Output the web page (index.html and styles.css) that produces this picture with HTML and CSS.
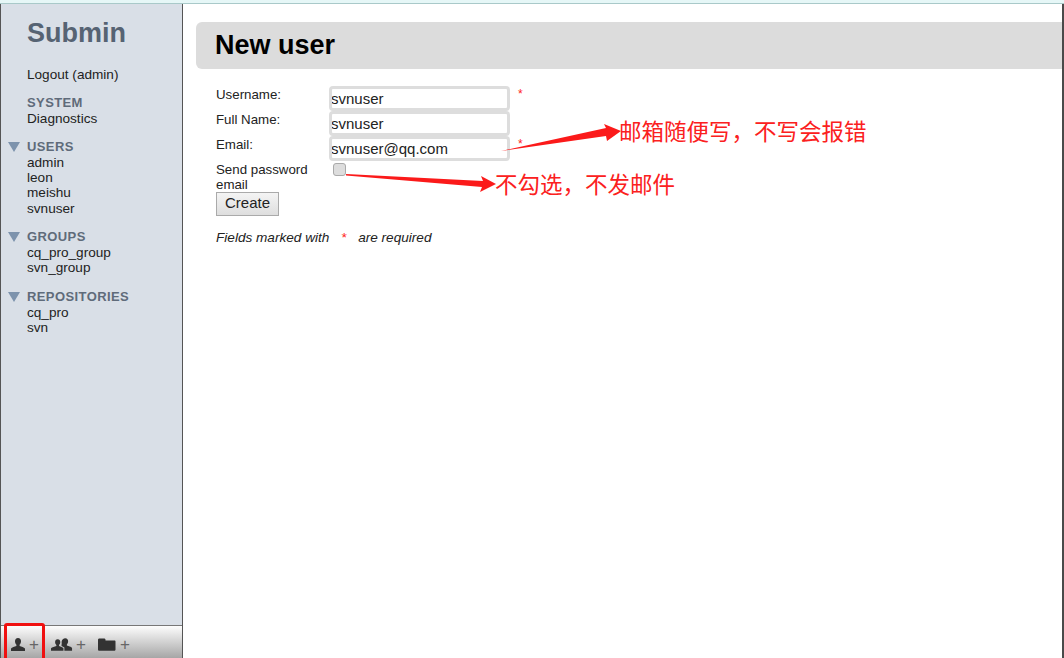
FILE: index.html
```html
<!DOCTYPE html>
<html lang="en">

<head>
    <meta charset="UTF-8">
    <meta name="viewport" content="width=device-width, initial-scale=1.0">
    <title>Submin - New user</title>
    <link rel="stylesheet" href="styles.css">
</head>

<body>
    <div class="top-strip"></div>
    <div class="layout">
        <aside class="sidebar">
            <div class="side-content">
                <h2 class="logo">Submin</h2>
                <a class="logout">Logout (admin)</a>

                <div class="section">
                    <h3>SYSTEM</h3>
                    <a>Diagnostics</a>
                </div>
                <div class="section tight">
                    <h3><span class="tri"></span>USERS</h3>
                    <a>admin</a>
                    <a>leon</a>
                    <a>meishu</a>
                    <a>svnuser</a>
                </div>
                <div class="section">
                    <h3><span class="tri"></span>GROUPS</h3>
                    <a>cq_pro_group</a>
                    <a>svn_group</a>
                </div>
                <div class="section">
                    <h3><span class="tri"></span>REPOSITORIES</h3>
                    <a>cq_pro</a>
                    <a>svn</a>
                </div>
            </div>
            <div class="side-tools">
                <div class="tool tool-user">
                    <svg width="16" height="13" viewBox="0 0 16 13">
                        <path d="M8 0c2 0 3 1.500 3 3.300 0 1.500-.6 2.700-1.400 3.400v1.200c1.800.6 4.400 1.300 5.400 2.600v2.500H1v-2.500c1-1.300 3.600-2 5.400-2.600V6.700C5.600 6 5 4.800 5 3.300 5 1.500 6 0 8 0z" fill="#333" />
                    </svg>
                    <span>+</span>
                </div>
                <div class="tool tool-group">
                    <svg width="22" height="13" viewBox="0 0 23 13">
                        <path d="M7 1c1.800 0 2.700 1.300 2.700 3 0 1.300-.5 2.400-1.300 3v1c1.600.5 3.600 1.200 4.600 2.300V13H0v-2.700C1 9.200 4 8.500 5.600 8V7C4.800 6.400 4.300 5.300 4.300 4c0-1.700 .9-3 2.700-3z" fill="#333" />
                        <path d="M15 0c1.900 0 2.900 1.400 2.900 3.200 0 1.400-.5 2.500-1.300 3.200v1.200c1.700.5 4.400 1.300 5.400 2.500V13h-8v-3.300c-.8-.8-2-1.300-3-1.700V7c.3-.8 .2-2 .1-3.500C11.400 1.300 13 0 15 0z" fill="#333" />
                    </svg>
                    <span>+</span>
                </div>
                <div class="tool tool-folder">
                    <svg width="18" height="13" viewBox="0 0 18 13">
                        <path d="M0 2c0-1 .5-1.500 1.500-1.500h4.500c1 0 1.500 .5 1.500 1.500v.5h9c.6 0 1 .4 1 1v8c0 .8-.5 1.300-1.300 1.300H1.300C.5 12.800 0 12.300 0 11.500z" fill="#333" />
                    </svg>
                    <span>+</span>
                </div>
            </div>
        </aside>

        <main class="main">
            <h1 class="title">New user</h1>
            <form class="user-form">
                <label class="lbl">Username:</label>
                <input class="field" type="text" value="svnuser">
                <span class="req">*</span>

                <label class="lbl">Full Name:</label>
                <input class="field" type="text" value="svnuser">
                <span></span>

                <label class="lbl">Email:</label>
                <input class="field" type="text" value="svnuser@qq.com">
                <span class="req">*</span>

                <label class="lbl lbl-wrap">Send password email</label>
                <span class="check"></span>
                <span></span>
            </form>
            <button class="create" type="button">Create</button>
            <p class="note">Fields marked with <span class="note-star">*</span> are required</p>
        </main>
    </div>

    <!-- screenshot annotations, drawn on top of the page -->
    <div class="red-box"></div>
    <svg class="arrows" width="1064" height="658" viewBox="0 0 1064 658">
        <path d="M501 151 L606 128 L604 124 L621 131 L607 141 L606 136 Z" fill="#fb1a1a" />
        <path d="M346 174 L483 181 L481 176 L496 184 L480 192 L482 187 L346 175.500 Z" fill="#fb1a1a" />
    </svg>
    <div class="note-red note-one">邮箱随便写，不写会报错</div>
    <div class="note-red note-two">不勾选，不发邮件</div>
</body>

</html>
```

FILE: styles.css
```css
* {
    box-sizing: border-box;
}

html,
body {
    height: 100%;
}

body {
    margin: 0;
    font-family: "Liberation Sans", Arial, sans-serif;
    font-size: 13.6px;
    color: #222;
    background-color: #fff;
    overflow: hidden;
    display: flex;
    flex-direction: column;
}

.top-strip {
    height: 4px;
    flex: none;
    background-color: #e6f7f7;
    border-bottom: 1px solid #a9c9c9;
}

.layout {
    flex: 1;
    display: flex;
    min-height: 0;
    border-right: 2px solid #4a4a4a;
}

.sidebar {
    width: 183px;
    flex: none;
    display: flex;
    flex-direction: column;
    background-color: #d9dfe7;
    border-left: 1px solid #555;
    border-right: 1px solid #555;
}

.side-content {
    flex: 1;
    padding: 13px 0 0 26px;
}

.side-content a {
    display: block;
    line-height: 15.35px;
}

.logo {
    margin: 0;
    font-size: 27px;
    line-height: 32px;
    color: #566373;
}

.logout {
    margin-top: 18px;
}

.section {
    margin-top: 13px;
}

.section.tight {
    margin-top: 12px;
}

.section h3 {
    position: relative;
    margin: 0;
    font-size: 13px;
    line-height: 16px;
    letter-spacing: 0.4px;
    color: #5f6b7a;
}

.tri {
    position: absolute;
    left: -19px;
    top: 3px;
    width: 0;
    height: 0;
    border-left: 6px solid transparent;
    border-right: 6px solid transparent;
    border-top: 10px solid #7d93ad;
}

.side-tools {
    height: 33px;
    flex: none;
    display: flex;
    align-items: center;
    padding: 4px 0 0 9px;
    border-top: 1px solid #777;
    background: linear-gradient(#fdfdfd, #a6a6a6);
}

.tool {
    display: flex;
    align-items: center;
    gap: 3px;
    color: #666;
}

.tool span {
    font-size: 17px;
    line-height: 13px;
}

.tool-group {
    margin-left: 12px;
}

.tool-folder {
    margin-left: 12px;
    gap: 4px;
}

.main {
    flex: 1;
    min-width: 0;
    padding: 18px 0 0 13px;
}

.title {
    margin: 0;
    height: 47px;
    padding-left: 19px;
    font-size: 27px;
    line-height: 46px;
    color: #000;
    background-color: #dcdcdc;
    border-radius: 6px 0 0 6px;
}

.user-form {
    display: grid;
    grid-template-columns: 113px 181px 20px;
    grid-auto-rows: auto;
    margin: 17px 0 0 20px;
    width: 330px;
}

.lbl {
    line-height: 15px;
    padding-top: 1px;
    font-size: 13.3px;
}

.lbl-wrap {
    padding: 0 10px 0 0;
    margin-top: 1px;
}

.field {
    width: 181px;
    height: 25px;
    padding: 0 0 1px 0;
    text-indent: -1px;
    border: 3px solid #ddd;
    border-radius: 4px;
    font-family: "Liberation Sans", Arial, sans-serif;
    font-size: 15px;
    color: #222;
    background-color: #fff;
    outline: none;
}

.req {
    padding: 1px 0 0 8px;
    color: #f22;
    font-size: 12px;
}

.check {
    display: block;
    width: 13px;
    height: 13px;
    margin: 2px 0 0 4px;
    border: 1px solid #aaa;
    border-radius: 3px;
    background-color: #ddd;
}

.create {
    display: block;
    width: 63px;
    height: 24px;
    margin: 0 0 0 20px;
    padding: 0 0 3px;
    font-family: "Liberation Sans", Arial, sans-serif;
    font-size: 15px;
    color: #222;
    border: 1px solid #aaa;
    background: linear-gradient(#f4f4f4, #dedede);
}

.note {
    margin: 14px 0 0 20px;
    font-style: italic;
    line-height: 15px;
}

.note-star {
    margin: 0 8px;
    color: #f22;
}

/* annotations */
.arrows {
    position: absolute;
    left: 0;
    top: 0;
    pointer-events: none;
}

.red-box {
    position: absolute;
    left: 4px;
    top: 623px;
    width: 41px;
    height: 40px;
    border: 3px solid #f01010;
    border-radius: 3px;
}

.note-red {
    position: absolute;
    font-family: "Noto Sans CJK SC", sans-serif;
    font-size: 22.5px;
    line-height: 32px;
    color: #fb2020;
    white-space: nowrap;
}

.note-one {
    left: 619px;
    top: 114px;
}

.note-two {
    left: 495px;
    top: 167px;
}
```
